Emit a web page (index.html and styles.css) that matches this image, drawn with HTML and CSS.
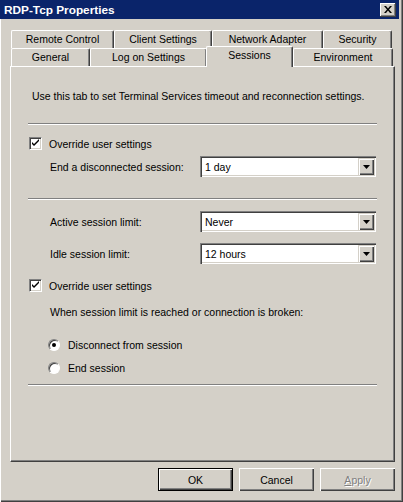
FILE: index.html
```html
<!DOCTYPE html>
<html lang="en">
<head>
 <meta charset="UTF-8">
 <meta name="viewport" content="width=device-width, initial-scale=1.0">
 <title>RDP-Tcp Properties</title>
 <link rel="stylesheet" href="styles.css">
</head>
<body>
 <div class="window">
   <div class="titlebar">
     <span class="title">RDP-Tcp Properties</span>
     <div class="close">
       <svg width="8" height="7" viewBox="0 0 8 7"><path d="M0 0h2l2 2.5L6 0h2L5 3.5 8 7H6L4 4.5 2 7H0l3-3.5z" fill="#000"/></svg>
     </div>
   </div>
   <div class="content">
     <div class="tabs">
       <div class="tab-row">
         <div class="tab tabRemote">Remote Control</div>
         <div class="tab tabClient">Client Settings</div>
         <div class="tab tabNetwork">Network Adapter</div>
         <div class="tab tabSecurity">Security</div>
       </div>
       <div class="tab-row">
         <div class="tab tabGeneral">General</div>
         <div class="tab tabLogon">Log on Settings</div>
         <div class="tab tabSessions selected">Sessions</div>
         <div class="tab tabEnv">Environment</div>
       </div>
     </div>
     <div class="panel">
       <p class="intro">Use this tab to set Terminal Services timeout and reconnection settings.</p>
       <div class="sep sepFirst"></div>
       <div class="check checkFirst">
         <span class="box"><svg width="9" height="9" viewBox="0 0 9 9"><path d="M1 3v2l2 2 5-5V0L3 5z" fill="#000"/></svg></span>
         <span>Override user settings</span>
       </div>
       <div class="field fieldDisc">
         <span class="label">End a disconnected session:</span>
         <div class="combo"><span class="value">1 day</span><span class="drop"><svg width="7" height="4" viewBox="0 0 7 4"><path d="M0 0h7L3.5 4z" fill="#000"/></svg></span></div>
       </div>
       <div class="sep sepSecond"></div>
       <div class="field fieldActive">
         <span class="label">Active session limit:</span>
         <div class="combo"><span class="value">Never</span><span class="drop"><svg width="7" height="4" viewBox="0 0 7 4"><path d="M0 0h7L3.5 4z" fill="#000"/></svg></span></div>
       </div>
       <div class="field fieldIdle">
         <span class="label">Idle session limit:</span>
         <div class="combo"><span class="value">12 hours</span><span class="drop"><svg width="7" height="4" viewBox="0 0 7 4"><path d="M0 0h7L3.5 4z" fill="#000"/></svg></span></div>
       </div>
       <div class="check checkSecond">
         <span class="box"><svg width="9" height="9" viewBox="0 0 9 9"><path d="M1 3v2l2 2 5-5V0L3 5z" fill="#000"/></svg></span>
         <span>Override user settings</span>
       </div>
       <p class="when">When session limit is reached or connection is broken:</p>
       <div class="radio radioFirst"><span class="dot on"></span><span>Disconnect from session</span></div>
       <div class="radio radioSecond"><span class="dot"></span><span>End session</span></div>
       <div class="sep sepLast"></div>
     </div>
     <div class="buttons">
       <div class="button default">OK</div>
       <div class="button">Cancel</div>
       <div class="button disabled"><u>A</u>pply</div>
     </div>
   </div>
 </div>
</body>
</html>
```

FILE: styles.css
```css
 body {
   margin: 0;
   font-family: "Liberation Sans", Arial, sans-serif;
   font-size: 10.5px;
   color: #000;
 }
 .window {
   width: 403px;
   height: 502px;
   background-color: #d4d0c8;
   box-shadow: inset 1px 0 #fff, inset -1px -1px #404040, inset -2px -2px #808080;
 }
 .titlebar {
   display: flex;
   align-items: center;
   justify-content: space-between;
   height: 19px;
   margin-right: 4px;
   padding: 0 3px 0 4px;
   background-color: #0a246a;
   color: #fff;
 }
 .title {
   font-weight: bold;
   font-size: 11.8px;
 }
 .close {
   display: flex;
   align-items: center;
   justify-content: center;
   width: 16px;
   height: 14px;
   box-sizing: border-box;
   background-color: #d4d0c8;
   box-shadow: inset -1px -1px #404040, inset 1px 1px #fff, inset -2px -2px #808080;
 }
 .content {
   padding: 11px 8px 0 10px;
 }
 .tabs {
   margin-left: 1px;
 }
 .tab-row {
   display: flex;
   align-items: flex-start;
 }
 .tab {
   height: 18px;
   box-sizing: border-box;
   display: flex;
   align-items: center;
   justify-content: center;
   border-top: 1px solid #fff;
   border-left: 1px solid #fff;
   border-right: 1px solid #404040;
   border-radius: 2px 2px 0 0;
   box-shadow: inset -1px 0 #808080;
   padding-bottom: 1px;
   white-space: nowrap;
 }
 .tabRemote { width: 103px; }
 .tabClient { width: 98px; }
 .tabNetwork { width: 111px; }
 .tabSecurity { width: 69px; }
 .tabGeneral { width: 79px; }
 .tabLogon { width: 117px; }
 .tabSessions { width: 87px; margin-left: -1px; }
 .tabEnv { width: 100px; }
 .tab.selected {
   position: relative;
   z-index: 1;
   height: 21px;
   margin-top: -2px;
   margin-bottom: -1px;
   padding-bottom: 4px;
   background-color: #d4d0c8;
 }
 .panel {
   height: 396px;
   box-sizing: border-box;
   padding: 23px 17px 0 17px;
   border-top: 1px solid #fff;
   border-left: 1px solid #fff;
   border-right: 1px solid #404040;
   border-bottom: 1px solid #404040;
   box-shadow: inset -1px -1px #808080;
 }
 .intro, .when {
   margin: 0;
   line-height: 13px;
   white-space: nowrap;
 }
 .intro {
   margin-left: 4px;
 }
 .sep {
   height: 0;
   border-top: 1px solid #808080;
   border-bottom: 1px solid #fff;
 }
 .sepFirst { margin-top: 20px; }
 .sepSecond { margin-top: 21px; }
 .sepLast { margin-top: 10px; }
 .check, .radio {
   display: flex;
   align-items: center;
   height: 13px;
 }
 .check {
   margin-left: 1px;
   gap: 7px;
 }
 .checkFirst { margin-top: 12px; }
 .checkSecond { margin-top: 15px; }
 .box {
   display: flex;
   align-items: center;
   justify-content: center;
   width: 13px;
   height: 13px;
   box-sizing: border-box;
   background-color: #fff;
   border: 1px solid;
   border-color: #808080 #fff #fff #808080;
   box-shadow: inset 1px 1px #404040, inset -1px -1px #d4d0c8;
 }
 .field {
   display: flex;
   align-items: center;
 }
 .label {
   width: 150px;
   margin-left: 22px;
 }
 .fieldDisc { margin-top: 6px; }
 .fieldActive { margin-top: 11px; }
 .fieldIdle { margin-top: 11px; }
 .combo {
   display: flex;
   align-items: center;
   justify-content: space-between;
   width: 176px;
   height: 21px;
   box-sizing: border-box;
   padding: 2px;
   background-color: #fff;
   box-shadow: inset 1px 1px #808080, inset 2px 2px #404040, inset -1px -1px #fff, inset -2px -2px #d4d0c8;
 }
 .value {
   padding-left: 3px;
 }
 .drop {
   display: flex;
   align-items: center;
   justify-content: center;
   width: 16px;
   height: 17px;
   box-sizing: border-box;
   background-color: #d4d0c8;
   box-shadow: inset 1px 1px #d4d0c8, inset 2px 2px #fff, inset -1px -1px #404040, inset -2px -2px #808080;
 }
 .when {
   margin-top: 14px;
   margin-left: 22px;
 }
 .radio {
   margin-left: 20px;
   gap: 8px;
 }
 .radioFirst { margin-top: 19px; }
 .radioSecond { margin-top: 10px; }
 .dot {
   display: flex;
   align-items: center;
   justify-content: center;
   width: 12px;
   height: 12px;
   box-sizing: border-box;
   border-radius: 50%;
   background-color: #fff;
   border: 1px solid;
   border-color: #808080 #fff #fff #808080;
   box-shadow: inset 1px 1px #404040;
 }
 .dot.on::after {
   content: "";
   width: 4px;
   height: 4px;
   border-radius: 50%;
   background-color: #000;
 }
 .buttons {
   display: flex;
   justify-content: flex-end;
   gap: 6px;
   margin-top: 6px;
 }
 .button {
   display: flex;
   align-items: center;
   justify-content: center;
   width: 75px;
   height: 23px;
   box-sizing: border-box;
   box-shadow: inset 1px 1px #fff, inset -1px -1px #404040, inset -2px -2px #808080;
 }
 .button.default {
   border: 1px solid #000;
 }
 .button.disabled {
   color: #808080;
   text-shadow: 1px 1px #fff;
 }
```
